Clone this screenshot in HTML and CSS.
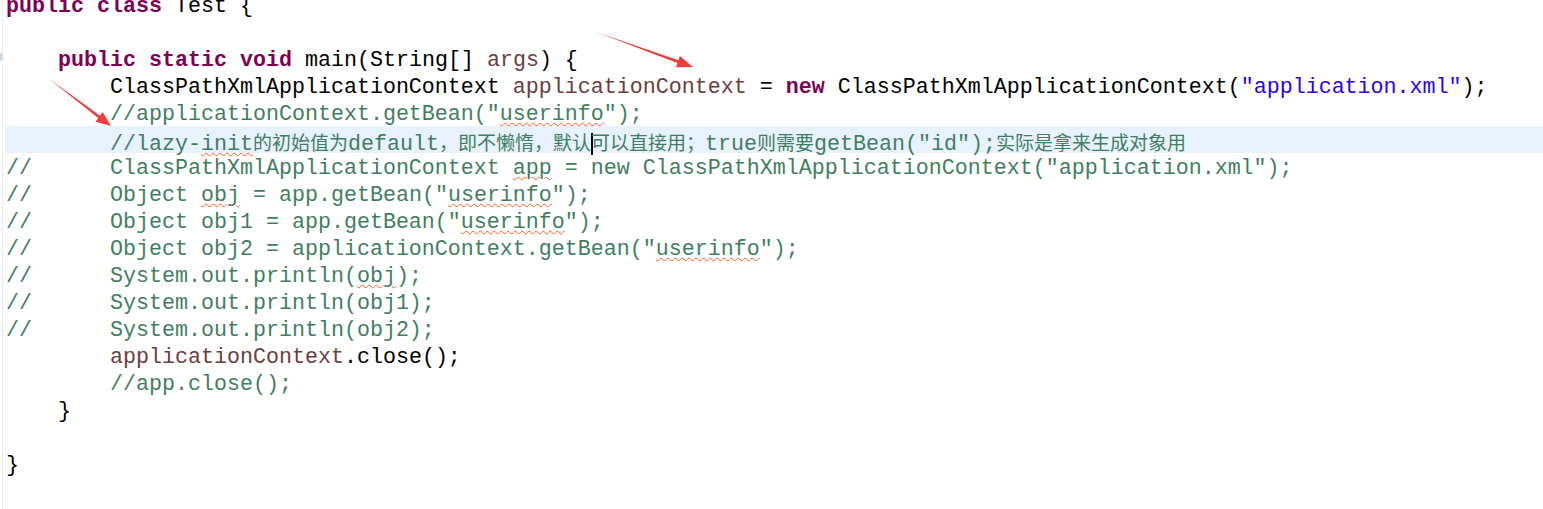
FILE: index.html
```html
<!DOCTYPE html>
<html lang="zh-CN">

<head>
    <meta charset="UTF-8">
    <title>Test.java</title>
    <link rel="stylesheet" href="styles.css">
</head>

<body>
    <!-- 左侧折叠标记 -->
    <span class="fold"></span>
    <div class="editor">
        <div class="code">
            <div class="ln"><span class="kw">public</span> <span class="kw">class</span> Test {</div>
            <div class="ln"></div>
            <div class="ln">    <span class="kw">public</span> <span class="kw">static</span> <span class="kw">void</span> main(String[] <span class="var">args</span>) {</div>
            <div class="ln">        ClassPathXmlApplicationContext <span class="var">applicationContext</span> = <span class="kw">new</span> ClassPathXmlApplicationContext(<span class="str">"application.xml"</span>);</div>
            <div class="ln">        <span class="cmt">//applicationContext.getBean("<span class="typo">userinfo</span>");</span></div>
            <div class="ln current">        <span class="cmt">//lazy-<span class="typo">init</span><span class="cjk">的初始值为</span>default<span class="cjk">，即不懒惰，默认</span><span class="caret"></span><span class="cjk">可以直接用；</span>true<span class="cjk">则需要</span>getBean("id");<span class="cjk">实际是拿来生成对象用</span></span></div>
            <div class="ln"><span class="cmt">//      ClassPathXmlApplicationContext <span class="typo">app</span> = new ClassPathXmlApplicationContext("application.xml");</span></div>
            <div class="ln"><span class="cmt">//      Object <span class="typo">obj</span> = app.getBean("<span class="typo">userinfo</span>");</span></div>
            <div class="ln"><span class="cmt">//      Object obj1 = app.getBean("<span class="typo">userinfo</span>");</span></div>
            <div class="ln"><span class="cmt">//      Object obj2 = applicationContext.getBean("<span class="typo">userinfo</span>");</span></div>
            <div class="ln"><span class="cmt">//      System.out.println(<span class="typo">obj</span>);</span></div>
            <div class="ln"><span class="cmt">//      System.out.println(obj1);</span></div>
            <div class="ln"><span class="cmt">//      System.out.println(obj2);</span></div>
            <div class="ln">        <span class="var">applicationContext</span>.close();</div>
            <div class="ln">        <span class="cmt">//app.close();</span></div>
            <div class="ln">    }</div>
            <div class="ln"></div>
            <div class="ln">}</div>
        </div>
    </div>

    <!-- 截图上的红色箭头 -->
    <svg class="marks" width="1543" height="509" viewBox="0 0 1543 509">
        <polygon fill="#f03c3c" points="596,32 678.4,60.2 679.9,55.9 693,67 675.9,67.3 677.4,63.0" />
        <polygon fill="#f03c3c" points="48,78 100.0,115.7 102.7,112.1 111,126 95.5,121.7 98.2,118.1" />
    </svg>
</body>

</html>
```

FILE: styles.css
```css
* {
    padding: 0;
    margin: 0;
}

body {
    position: relative;
    width: 1543px;
    height: 509px;
    overflow: hidden;
    background: #fff;
}

.editor {
    /* 编辑区左边那条浅灰线 */
    margin-left: 2px;
    height: 509px;
    overflow: hidden;
    border-left: 1px solid #ececec;
}

.code {
    /* 第一行被截掉一半 */
    margin-top: -9px;
    font-family: "Liberation Mono", "Noto Sans CJK SC", monospace;
    font-size: 21.67px;
    line-height: 27px;
    color: #000;
}

.ln {
    box-sizing: border-box;
    height: 27px;
    /* 文字比行框略靠下 */
    padding: 2px 0 0 1px;
    margin-left: 2px;
    white-space: pre;
}

.current {
    /* 当前行高亮 */
    background: #e8f2fe;
}

.kw {
    color: #7f0055;
    font-weight: bold;
}

.var {
    color: #6a3e3e;
}

.str {
    color: #2a00ff;
}

.cmt {
    color: #3f7f5f;
}

.cjk {
    font-family: "Noto Sans CJK SC", sans-serif;
    font-size: 19px;
}

.typo {
    /* 拼写检查的波浪线 */
    text-decoration: underline wavy #ff5a2a;
    text-decoration-thickness: 1px;
    text-underline-offset: 2px;
}

.caret {
    display: inline-block;
    width: 2px;
    height: 22px;
    margin-right: -2px;
    vertical-align: middle;
    background: #000;
}

.fold {
    position: absolute;
    left: -3px;
    top: 53px;
    width: 6px;
    height: 8px;
    border-radius: 50%;
    background: #c9d8e6;
}

.marks {
    position: absolute;
    left: 0;
    top: 0;
    pointer-events: none;
}
```
